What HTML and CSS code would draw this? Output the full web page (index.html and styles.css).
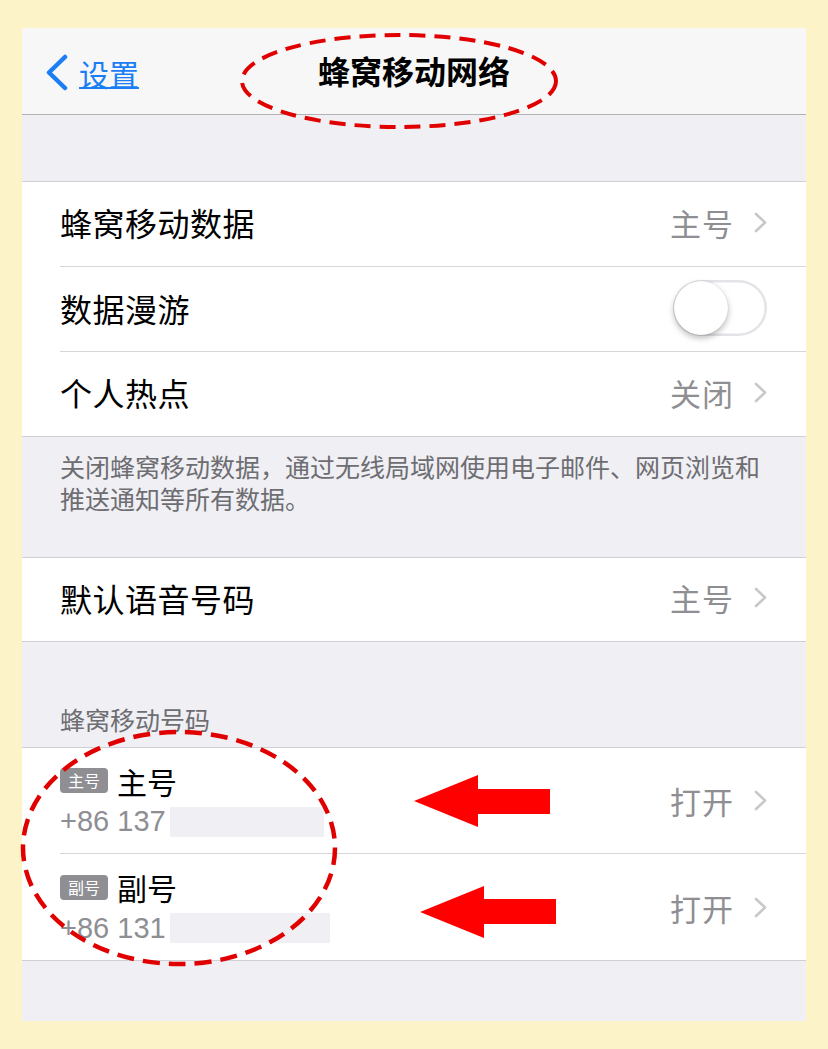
FILE: index.html
```html
<!DOCTYPE html>
<html lang="zh-CN">
<head>
<meta charset="utf-8">
<title>蜂窝移动网络</title>
<link rel="stylesheet" href="styles.css">
</head>
<body>
<div class="page">
  <div class="screen">
    <header class="nav">
      <a class="back" href="#">
        <svg class="back-chev" width="24" height="37" viewBox="0 0 24 37"><polyline points="20,3 4,18.5 20,34" fill="none" stroke="#1a7ef5" stroke-width="4.5" stroke-linecap="round" stroke-linejoin="round"/></svg>
        <span class="back-text">设置</span>
      </a>
      <h1 class="title">蜂窝移动网络</h1>
    </header>

    <div class="gap-top"></div>

    <section class="group">
      <div class="row">
        <span class="label">蜂窝移动数据</span>
        <span class="value">主号</span>
        <svg class="chev" width="13" height="21" viewBox="0 0 13 21"><polyline points="2,2 11,10.5 2,19" fill="none" stroke="#c7c7cc" stroke-width="2.6" stroke-linecap="round" stroke-linejoin="round"/></svg>
      </div>
      <div class="row row-toggle">
        <span class="label">数据漫游</span>
        <span class="switch"><span class="knob"></span></span>
      </div>
      <div class="row">
        <span class="label">个人热点</span>
        <span class="value">关闭</span>
        <svg class="chev" width="13" height="21" viewBox="0 0 13 21"><polyline points="2,2 11,10.5 2,19" fill="none" stroke="#c7c7cc" stroke-width="2.6" stroke-linecap="round" stroke-linejoin="round"/></svg>
      </div>
    </section>

    <p class="note">关闭蜂窝移动数据，通过无线局域网使用电子邮件、网页浏览和推送通知等所有数据。</p>

    <section class="group">
      <div class="row row-short">
        <span class="label">默认语音号码</span>
        <span class="value">主号</span>
        <svg class="chev" width="13" height="21" viewBox="0 0 13 21"><polyline points="2,2 11,10.5 2,19" fill="none" stroke="#c7c7cc" stroke-width="2.6" stroke-linecap="round" stroke-linejoin="round"/></svg>
      </div>
    </section>

    <div class="section-head">蜂窝移动号码</div>

    <section class="group">
      <div class="row row-sim">
        <div class="sim">
          <div class="sim-name"><span class="badge">主号</span><span class="sim-title">主号</span></div>
          <div class="sim-num"><span>+86 137</span><span class="mask mask-a"></span></div>
        </div>
        <span class="value">打开</span>
        <svg class="chev" width="13" height="21" viewBox="0 0 13 21"><polyline points="2,2 11,10.5 2,19" fill="none" stroke="#c7c7cc" stroke-width="2.6" stroke-linecap="round" stroke-linejoin="round"/></svg>
      </div>
      <div class="row row-sim row-sim-2">
        <div class="sim">
          <div class="sim-name"><span class="badge">副号</span><span class="sim-title">副号</span></div>
          <div class="sim-num"><span>+86 131</span><span class="mask mask-b"></span></div>
        </div>
        <span class="value">打开</span>
        <svg class="chev" width="13" height="21" viewBox="0 0 13 21"><polyline points="2,2 11,10.5 2,19" fill="none" stroke="#c7c7cc" stroke-width="2.6" stroke-linecap="round" stroke-linejoin="round"/></svg>
      </div>
    </section>

    <div class="gap-bottom"></div>
  </div>

  <svg class="marks" width="828" height="1049" viewBox="0 0 828 1049">
    <ellipse cx="399" cy="81" rx="157" ry="46" fill="none" stroke="#e10000" stroke-width="4" stroke-dasharray="16 9"/>
    <ellipse cx="179" cy="848" rx="156" ry="116" fill="none" stroke="#e10000" stroke-width="4.5" stroke-dasharray="17 9"/>
    <polygon points="414,801 478,775 478,789 550,789 550,814 478,814 478,827" fill="#ff0000"/>
    <polygon points="420,912 484,886 484,899 556,899 556,924 484,924 484,938" fill="#ff0000"/>
  </svg>
</div>
</body>
</html>
```
FILE: styles.css
```css
html, body {
  margin: 0;
  padding: 0;
}
body {
  background: #fcf4c8;
  font-family: "Noto Sans CJK SC", "Noto Sans", sans-serif;
}
.page {
  position: relative;
  width: 828px;
  height: 1049px;
  padding-top: 28px;
  box-sizing: border-box;
}
.screen {
  margin-left: 22px;
  width: 784px;
  background: #efeff4;
}
.nav {
  height: 86px;
  background: #f7f7f8;
  border-bottom: 1px solid #b2b2b4;
  display: flex;
  align-items: center;
  justify-content: center;
  position: relative;
}
.back {
  position: absolute;
  left: 23px;
  top: 26px;
  display: flex;
  align-items: center;
  color: #1a7ef5;
  text-decoration: none;
}
.back-chev {
  display: block;
}
.back-text {
  margin-left: 10px;
  font-size: 30px;
  line-height: 34px;
  text-decoration: underline;
  text-decoration-thickness: 1.5px;
  text-underline-offset: 1px;
}
.title {
  margin: 0;
  font-size: 32px;
  font-weight: 700;
  line-height: 40px;
  color: #000;
  margin-top: -3px;
}
.gap-top {
  height: 66px;
}
.group {
  background: #fff;
  border-top: 1px solid #cfcfd4;
  border-bottom: 1px solid #cfcfd4;
}
.row {
  display: flex;
  align-items: center;
  height: 80px;
  padding-bottom: 4px;
  margin-left: 38px;
  padding-right: 39px;
  border-bottom: 1px solid #d6d6da;
}
.row:last-child {
  border-bottom: none;
}
.row-toggle {
  height: 82px;
  padding-bottom: 2px;
}
.row-short {
  height: 79px;
}
.row-sim {
  height: 105px;
  padding-bottom: 0;
  align-items: center;
}
.row-sim-2 {
  height: 106px;
}
.label {
  flex: 1;
  font-size: 32px;
  color: #000;
  letter-spacing: 0.5px;
}
.value {
  font-size: 31px;
  color: #8e8e93;
  letter-spacing: 1px;
}
.chev {
  display: block;
  margin-left: 20px;
}
.switch {
  display: flex;
  align-items: center;
  width: 94px;
  height: 56px;
  padding: 1px;
  box-sizing: border-box;
  border-radius: 28px;
  box-shadow: inset 0 0 0 2.5px #e4e4e8;
}
.knob {
  width: 54px;
  height: 54px;
  border-radius: 50%;
  background: #fff;
  box-shadow: 0 3px 6px rgba(0, 0, 0, 0.28), 0 0 1px rgba(0, 0, 0, 0.2);
}
.note {
  margin: 0;
  padding: 13px 40px 43px 38px;
  font-size: 25px;
  line-height: 32px;
  color: #6d6d72;
}
.section-head {
  padding: 61px 0 12px 38px;
  font-size: 25px;
  line-height: 32px;
  color: #6d6d72;
}
.sim {
  flex: 1;
  display: flex;
  flex-direction: column;
  padding-top: 2px;
}
.sim-name {
  display: flex;
  align-items: center;
  height: 36px;
}
.badge {
  display: inline-block;
  width: 48px;
  height: 25px;
  line-height: 25px;
  text-align: center;
  border-radius: 4px;
  background: #8e8e93;
  color: #fff;
  font-size: 16px;
  margin-right: 9px;
}
.sim-title {
  font-size: 30px;
  line-height: 36px;
  color: #000;
}
.sim-num {
  display: flex;
  align-items: center;
  height: 38px;
  margin-top: 4px;
  font-family: "Liberation Sans", "Noto Sans", sans-serif;
  font-size: 29px;
  color: #8e8e93;
}
.mask {
  display: inline-block;
  height: 30px;
  margin-left: 4px;
  background: #efeff4;
}
.mask-a {
  width: 154px;
}
.mask-b {
  width: 160px;
}
.gap-bottom {
  height: 60px;
}
.marks {
  position: absolute;
  left: 0;
  top: 0;
  pointer-events: none;
}
```
